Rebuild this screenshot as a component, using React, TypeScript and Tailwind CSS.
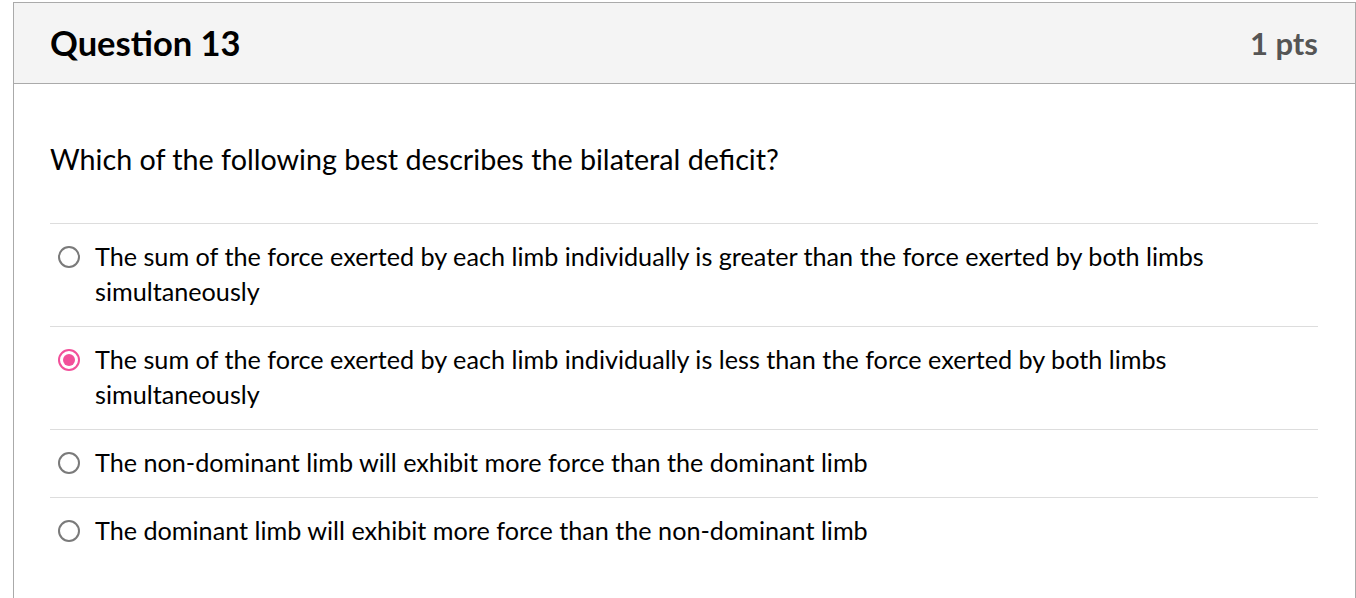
const answers = [
  {
    text: "The sum of the force exerted by each limb individually is greater than the force exerted by both limbs simultaneously",
    selected: false,
  },
  {
    text: "The sum of the force exerted by each limb individually is less than the force exerted by both limbs simultaneously",
    selected: true,
  },
  { text: "The non-dominant limb will exhibit more force than the dominant limb", selected: false },
  { text: "The dominant limb will exhibit more force than the non-dominant limb", selected: false },
];

function Radio({ checked }: { checked: boolean }) {
  if (checked) {
    return (
      <span className="flex h-[22px] w-[22px] shrink-0 items-center justify-center rounded-full border-2 border-[#f2509a] bg-white">
        <span className="h-[12px] w-[12px] rounded-full bg-[#f2509a]" />
      </span>
    );
  }
  return <span className="h-[22px] w-[22px] shrink-0 rounded-full border-2 border-[#7a7a7a] bg-white" />;
}

export default function App() {
  return (
    <div
      className="min-h-[598px] bg-white pl-[13px] pt-[2px]"
      style={{ fontFamily: "Lato, 'Open Sans', sans-serif" }}
    >
      <div className="min-h-[596px] border-l border-r border-t border-[#aaaaaa]">
        <div className="flex h-[81px] items-center justify-between border-b border-[#aaaaaa] bg-[#f4f4f4] pl-[36px] pr-[37px]">
          <h2 className="text-[34.5px] font-bold text-black">Question 13</h2>
          <span className="text-[31px] font-bold text-[#555555]">1 pts</span>
        </div>
        <div className="px-[36px] pr-[37px]">
          <p className="pt-[55px] pb-[44px] text-[28.7px] leading-[40px] text-black">
            Which of the following best describes the bilateral deficit?
          </p>
          {answers.map((a) => (
            <div key={a.text} className="flex gap-[15px] border-t border-[#dddddd] pt-[15px] pb-[17px] pl-[8px]">
              <div className="flex h-[35px] items-center">
                <Radio checked={a.selected} />
              </div>
              <span className="text-[25.2px] leading-[35px] text-black">{a.text}</span>
            </div>
          ))}
        </div>
      </div>
    </div>
  );
}
